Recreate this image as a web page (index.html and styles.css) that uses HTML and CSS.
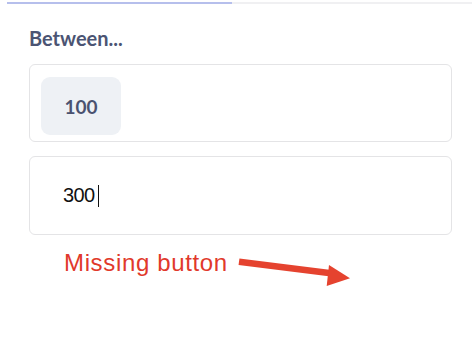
FILE: index.html
```html
<!DOCTYPE html>
<html lang="en">
<head>
<meta charset="utf-8">
<title>Between filter</title>
<link rel="stylesheet" href="styles.css">
</head>
<body>
<div class="progress"><div class="progress-fill"></div></div>
<div class="panel">
  <div class="label">Between...</div>
  <div class="field field-chips">
    <span class="chip">100</span>
  </div>
  <div class="field field-input">
    <span class="value">300</span><span class="caret"></span>
  </div>
  <div class="annotation">
    <span class="note">Missing button</span>
    <svg class="arrow" width="120" height="44" viewBox="0 0 120 44" aria-hidden="true">
      <line x1="4" y1="11.7" x2="96" y2="23.3" stroke="#e5432f" stroke-width="6.6"/>
      <polygon points="94,15 115,28.3 91.7,36" fill="#e5432f"/>
    </svg>
  </div>
</div>
</body>
</html>
```

FILE: styles.css
```css
html, body {
  margin: 0;
  padding: 0;
  background: #ffffff;
}

body {
  width: 474px;
  height: 339px;
  overflow: hidden;
  font-family: "Lato", "Liberation Sans", sans-serif;
}

.progress {
  margin: 2px 2px 0 7px;
  height: 2px;
  background: #f0f0f2;
}

.progress-fill {
  width: 225px;
  height: 100%;
  background: #b6bfec;
}

.panel {
  padding: 0 22px 0 29px;
}

.label {
  margin-top: 22px;
  font-size: 20px;
  font-weight: 700;
  line-height: 24px;
  color: #4b5473;
}

.field {
  box-sizing: border-box;
  border: 1px solid #e4e4e6;
  border-radius: 6px;
  background: #ffffff;
}

.field-chips {
  margin-top: 14px;
  height: 78px;
  padding: 12px 11px 5px;
  display: flex;
  align-items: flex-start;
}

.chip {
  display: flex;
  align-items: center;
  justify-content: center;
  width: 80px;
  height: 58px;
  border-radius: 9px;
  background: #eef1f5;
  font-size: 19px;
  font-weight: 700;
  color: #4a5270;
}

.field-input {
  margin-top: 14px;
  height: 79px;
  padding: 0 0 0 33px;
  display: flex;
  align-items: center;
}

.value {
  font-family: "Liberation Sans", Arial, sans-serif;
  font-size: 20px;
  letter-spacing: -0.6px;
  color: #111111;
}

.caret {
  width: 1px;
  height: 22px;
  margin-left: 3px;
  background: #111111;
}

.annotation {
  margin-top: 14px;
  padding-left: 35px;
  display: flex;
  align-items: flex-start;
}

.note {
  font-family: "Liberation Sans", Arial, sans-serif;
  font-size: 24px;
  letter-spacing: 0.65px;
  color: #e1392b;
  line-height: 27px;
}

.arrow {
  display: block;
  margin-left: 7px;
  margin-top: 1px;
}
```
